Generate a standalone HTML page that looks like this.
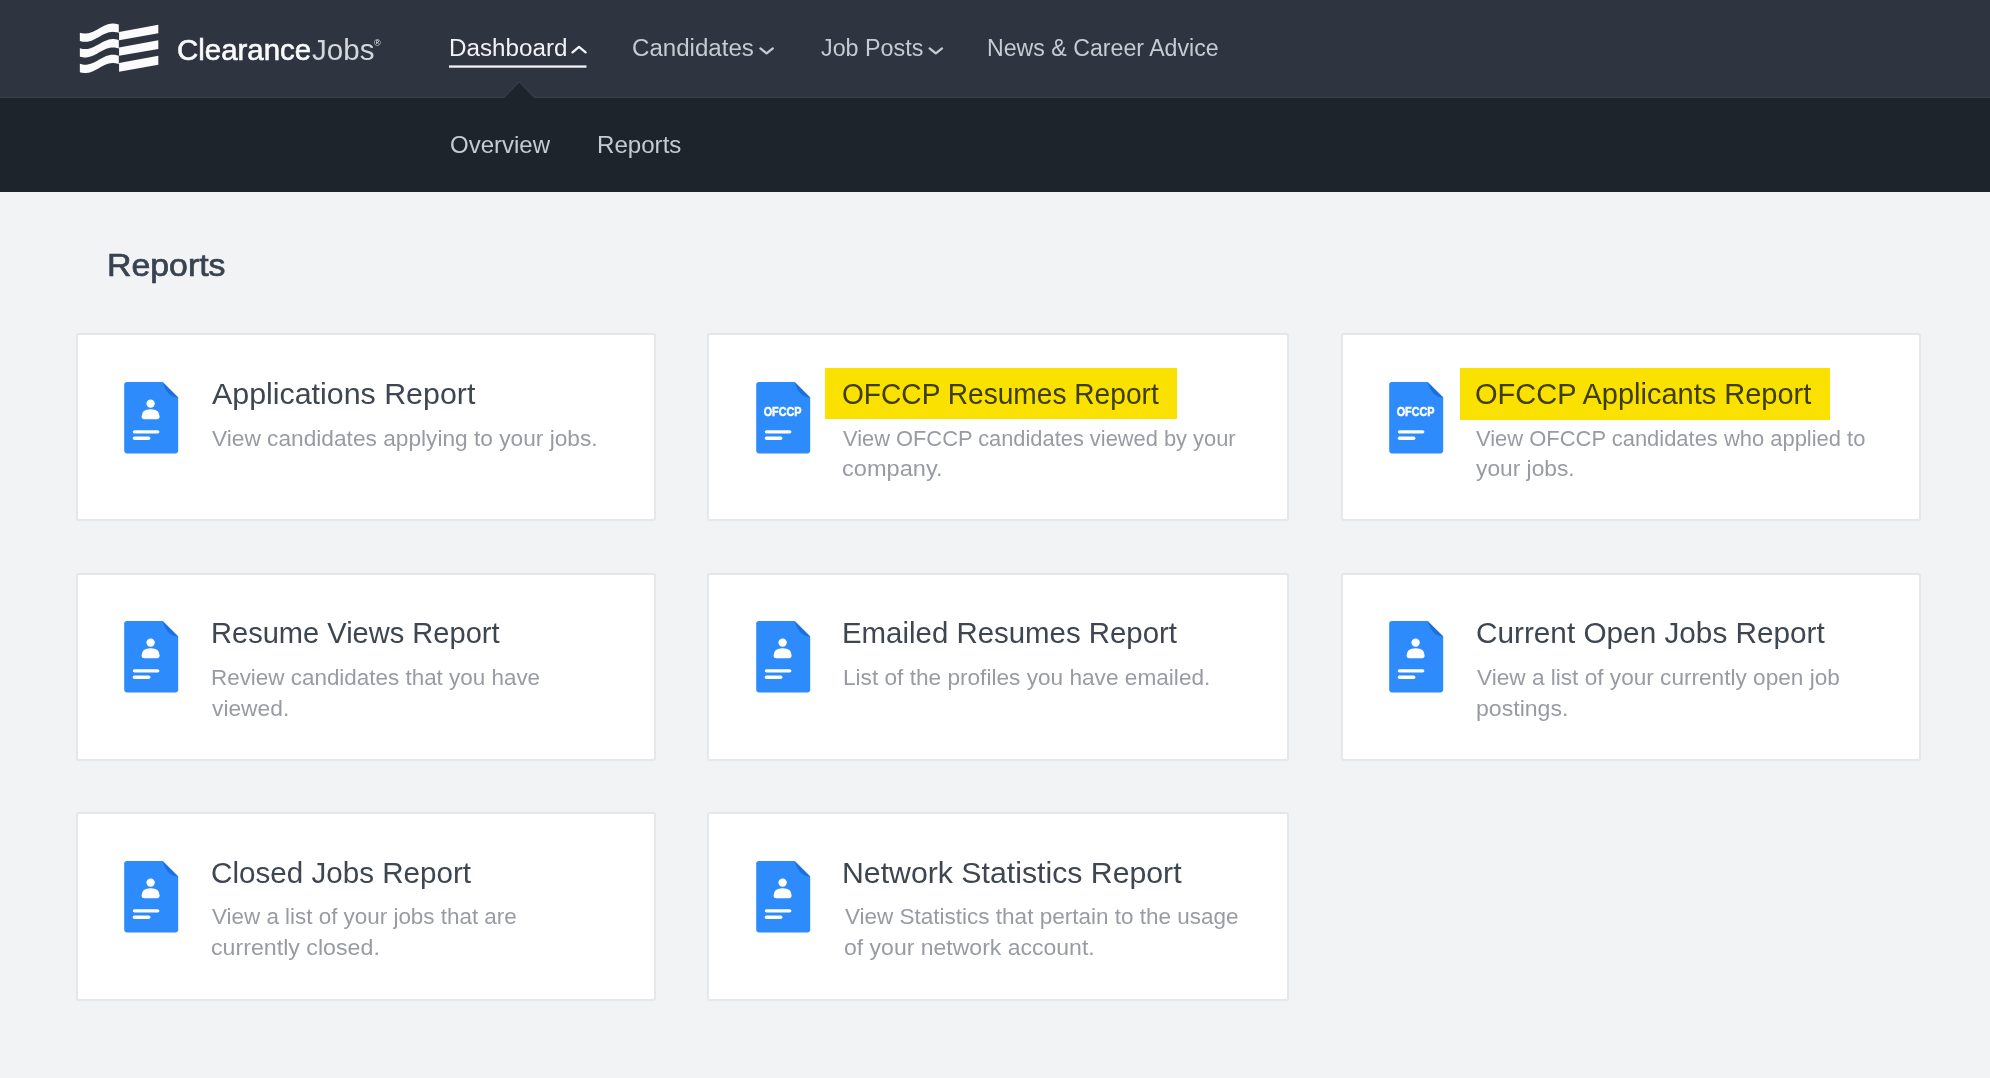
<!DOCTYPE html>
<html><head><meta charset="utf-8"><style>
html,body{margin:0;padding:0}
body{width:1990px;height:1078px;overflow:hidden;position:relative;background:#f1f3f5;font-family:"Liberation Sans",sans-serif}
.t{position:absolute;white-space:nowrap;transform-origin:0 0}
.nav{position:absolute;left:0;top:0;width:1990px;height:98px;background:#2e3440}
.sub{position:absolute;left:0;top:98px;width:1990px;height:94px;background:#1e242c}
.card{position:absolute;box-sizing:border-box;background:#fff;border:2px solid #e5e7ea;border-radius:3px;box-shadow:0 0 1px rgba(0,0,0,0.04)}
.ic{position:absolute;left:0;top:0}
.hl{position:absolute;background:#fae100;mix-blend-mode:multiply;z-index:2}
</style></head><body>
<div class="nav"></div>
<div class="sub"></div>
<svg style="position:absolute;left:0;top:0" width="1990" height="100"><polygon points="0,98 504.2,98 519.2,82.2 534.2,98 1990,98 1990,100 0,100" fill="#1e242c"/><polyline points="0,97.2 504,97.2 519.2,81.4 534.4,97.2 1990,97.2" fill="none" stroke="#363c47" stroke-width="1.4"/></svg>
<svg style="position:absolute;left:74px;top:18px" width="90" height="60" viewBox="0 0 1617 1078"><g fill="#fbfbfc"><polygon points="105.0,263.4 122.5,268.5 140.0,272.7 157.5,275.8 175.0,277.9 192.5,278.9 210.0,278.8 227.5,277.7 245.0,275.4 262.5,272.1 280.0,267.9 297.5,262.6 315.0,256.5 332.5,249.6 350.0,241.9 367.5,233.6 385.0,224.7 402.5,215.5 420.0,205.9 437.5,196.1 455.0,186.2 472.5,176.3 490.0,166.6 507.5,157.2 525.0,148.1 542.5,139.6 560.0,131.6 577.5,124.4 595.0,117.9 612.5,112.3 630.0,107.6 647.5,103.9 665.0,101.2 682.5,99.5 700.0,99.0 717.5,99.5 735.0,101.2 752.5,103.9 770.0,107.6 787.5,112.3 805.0,117.9 805.0,267.9 787.5,262.3 770.0,257.6 752.5,253.9 735.0,251.2 717.5,249.5 700.0,249.0 682.5,249.5 665.0,251.2 647.5,253.9 630.0,257.6 612.5,262.3 595.0,267.9 577.5,274.4 560.0,281.6 542.5,289.6 525.0,298.1 507.5,307.2 490.0,316.6 472.5,326.3 455.0,336.2 437.5,346.1 420.0,355.9 402.5,365.5 385.0,374.7 367.5,383.6 350.0,391.9 332.5,399.6 315.0,406.5 297.5,412.6 280.0,417.9 262.5,422.1 245.0,425.4 227.5,427.7 210.0,428.8 192.5,428.9 175.0,427.9 157.5,425.8 140.0,422.7 122.5,418.5 105.0,413.4"/><polygon points="105.0,543.4 122.5,548.5 140.0,552.7 157.5,555.8 175.0,557.9 192.5,558.9 210.0,558.8 227.5,557.7 245.0,555.4 262.5,552.1 280.0,547.9 297.5,542.6 315.0,536.5 332.5,529.6 350.0,521.9 367.5,513.6 385.0,504.7 402.5,495.5 420.0,485.9 437.5,476.1 455.0,466.2 472.5,456.3 490.0,446.6 507.5,437.2 525.0,428.1 542.5,419.6 560.0,411.6 577.5,404.4 595.0,397.9 612.5,392.3 630.0,387.6 647.5,383.9 665.0,381.2 682.5,379.5 700.0,379.0 717.5,379.5 735.0,381.2 752.5,383.9 770.0,387.6 787.5,392.3 805.0,397.9 805.0,547.9 787.5,542.3 770.0,537.6 752.5,533.9 735.0,531.2 717.5,529.5 700.0,529.0 682.5,529.5 665.0,531.2 647.5,533.9 630.0,537.6 612.5,542.3 595.0,547.9 577.5,554.4 560.0,561.6 542.5,569.6 525.0,578.1 507.5,587.2 490.0,596.6 472.5,606.3 455.0,616.2 437.5,626.1 420.0,635.9 402.5,645.5 385.0,654.7 367.5,663.6 350.0,671.9 332.5,679.6 315.0,686.5 297.5,692.6 280.0,697.9 262.5,702.1 245.0,705.4 227.5,707.7 210.0,708.8 192.5,708.9 175.0,707.9 157.5,705.8 140.0,702.7 122.5,698.5 105.0,693.4"/><polygon points="105.0,823.4 122.5,828.5 140.0,832.7 157.5,835.8 175.0,837.9 192.5,838.9 210.0,838.8 227.5,837.7 245.0,835.4 262.5,832.1 280.0,827.9 297.5,822.6 315.0,816.5 332.5,809.6 350.0,801.9 367.5,793.6 385.0,784.7 402.5,775.5 420.0,765.9 437.5,756.1 455.0,746.2 472.5,736.3 490.0,726.6 507.5,717.2 525.0,708.1 542.5,699.6 560.0,691.6 577.5,684.4 595.0,677.9 612.5,672.3 630.0,667.6 647.5,663.9 665.0,661.2 682.5,659.5 700.0,659.0 717.5,659.5 735.0,661.2 752.5,663.9 770.0,667.6 787.5,672.3 805.0,677.9 805.0,827.9 787.5,822.3 770.0,817.6 752.5,813.9 735.0,811.2 717.5,809.5 700.0,809.0 682.5,809.5 665.0,811.2 647.5,813.9 630.0,817.6 612.5,822.3 595.0,827.9 577.5,834.4 560.0,841.6 542.5,849.6 525.0,858.1 507.5,867.2 490.0,876.6 472.5,886.3 455.0,896.2 437.5,906.1 420.0,915.9 402.5,925.5 385.0,934.7 367.5,943.6 350.0,951.9 332.5,959.6 315.0,966.5 297.5,972.6 280.0,977.9 262.5,982.1 245.0,985.4 227.5,987.7 210.0,988.8 192.5,988.9 175.0,987.9 157.5,985.8 140.0,982.7 122.5,978.5 105.0,973.4"/><polygon points="810,250 1515,120 1515,275 810,398"/><polygon points="810,530 1515,400 1515,555 810,680"/><polygon points="810,810 1515,680 1515,838 810,965"/></g></svg>
<div class="t" style="left:177.43px;top:36px;font-size:29.07px;line-height:29.07px;color:#f9fafb;transform:scaleX(1.0124);-webkit-text-stroke:0.6px #f9fafb;">Clearance</div>
<div class="t" style="left:312.06px;top:35px;font-size:29.94px;line-height:29.94px;color:#d3d6db;transform:scaleX(0.9878);">Jobs</div>
<div class="t" style="left:374px;top:39px;font-size:9px;line-height:9px;color:#eee">&#174;</div>
<div class="t" style="left:449.00px;top:36px;font-size:24.56px;line-height:24.56px;color:#f1f2f5;transform:scaleX(0.9867);">Dashboard</div>
<div class="t" style="left:632.49px;top:36px;font-size:24.56px;line-height:24.56px;color:#c6cad1;transform:scaleX(0.9811);">Candidates</div>
<div class="t" style="left:821.15px;top:36px;font-size:24.56px;line-height:24.56px;color:#c6cad1;transform:scaleX(0.9493);">Job Posts</div>
<div class="t" style="left:986.89px;top:36px;font-size:24.56px;line-height:24.56px;color:#c6cad1;transform:scaleX(0.9434);">News &amp; Career Advice</div>
<svg style="position:absolute;left:0;top:0" width="1990" height="100"><g fill="none" stroke-width="2.3" stroke-linecap="round" stroke-linejoin="round"><polyline stroke="#f1f2f5" points="572.5,52.4 579,46.9 585.6,52.4"/><polyline stroke="#c6cad1" points="760.4,48.4 766.6,53.4 772.8,48.4"/><polyline stroke="#c6cad1" points="929.6,48.4 935.8,53.4 942,48.4"/></g><rect x="449" y="65.4" width="137.5" height="2.3" fill="#f1f2f5"/></svg>
<div class="t" style="left:449.66px;top:133px;font-size:24.71px;line-height:24.71px;color:#c6cad1;transform:scaleX(0.9719);">Overview</div>
<div class="t" style="left:596.81px;top:133px;font-size:24.71px;line-height:24.71px;color:#c6cad1;transform:scaleX(0.9756);">Reports</div>
<div class="t" style="left:106.71px;top:249px;font-size:31.98px;line-height:31.98px;color:#38434f;transform:scaleX(1.0587);-webkit-text-stroke:0.7px #38434f;">Reports</div>
<div class="card" style="left:76.07px;top:333.10px;width:579.93px;height:187.90px"></div>
<div style="position:absolute;left:124.37px;top:381.60px"><svg class="ic" width="56" height="73" viewBox="0 0 56 73"><path d="M3,0 H38.6 L54.2,15.4 V68.6 A2.8,2.8 0 0 1 51.4,71.4 H3 A2.8,2.8 0 0 1 0.2,68.6 V2.8 A2.8,2.8 0 0 1 3,0 Z" fill="#2d8bfb"/><path d="M38.6,0 L54.2,15.4 Q43,15.5 38.6,0 Z" fill="#1f6fd6"/><circle cx="26.6" cy="21.6" r="4.2" fill="#fff"/><path d="M17.6,34.6 Q17.6,27.3 26.6,27.3 Q35.6,27.3 35.6,34.6 Q35.6,37.2 33,37.2 H20.2 Q17.6,37.2 17.6,34.6 Z" fill="#fff"/><rect x="8.8" y="48.2" width="26.6" height="3.3" rx="1.65" fill="#fff"/><rect x="8.8" y="54.6" width="17.6" height="3.3" rx="1.65" fill="#fff"/></svg></div>
<div class="t" style="left:211.92px;top:379px;font-size:29.94px;line-height:29.94px;color:#3e4651;transform:scaleX(1.0144);">Applications Report</div>
<div class="t" style="left:211.89px;top:427px;font-size:22.97px;line-height:22.97px;color:#989ca2;transform:scaleX(0.9880);">View candidates applying to your jobs.</div>
<div class="card" style="left:707.40px;top:333.10px;width:582.10px;height:187.90px"></div>
<div style="position:absolute;left:755.70px;top:381.60px"><svg class="ic" width="56" height="73" viewBox="0 0 56 73"><path d="M3,0 H38.6 L54.2,15.4 V68.6 A2.8,2.8 0 0 1 51.4,71.4 H3 A2.8,2.8 0 0 1 0.2,68.6 V2.8 A2.8,2.8 0 0 1 3,0 Z" fill="#2d8bfb"/><path d="M38.6,0 L54.2,15.4 Q43,15.5 38.6,0 Z" fill="#1f6fd6"/><text x="7.7" y="33.9" textLength="37.9" lengthAdjust="spacingAndGlyphs" font-family="Liberation Sans" font-weight="bold" font-size="13.3" fill="#fff" stroke="#fff" stroke-width="0.5">OFCCP</text><rect x="8.8" y="48.2" width="26.6" height="3.3" rx="1.65" fill="#fff"/><rect x="8.8" y="54.6" width="17.6" height="3.3" rx="1.65" fill="#fff"/></svg></div>
<div class="hl" style="left:825.1px;top:368.2px;width:351.9px;height:51.3px"></div>
<div class="t" style="left:841.66px;top:379px;font-size:29.94px;line-height:29.94px;color:#3e4651;transform:scaleX(0.9393);">OFCCP Resumes Report</div>
<div class="t" style="left:842.89px;top:427px;font-size:22.97px;line-height:22.97px;color:#989ca2;transform:scaleX(0.9510);">View OFCCP candidates viewed by your</div>
<div class="t" style="left:842.00px;top:457px;font-size:22.97px;line-height:22.97px;color:#989ca2;transform:scaleX(1.0265);">company.</div>
<div class="card" style="left:1340.50px;top:333.10px;width:580.50px;height:187.90px"></div>
<div style="position:absolute;left:1388.80px;top:381.60px"><svg class="ic" width="56" height="73" viewBox="0 0 56 73"><path d="M3,0 H38.6 L54.2,15.4 V68.6 A2.8,2.8 0 0 1 51.4,71.4 H3 A2.8,2.8 0 0 1 0.2,68.6 V2.8 A2.8,2.8 0 0 1 3,0 Z" fill="#2d8bfb"/><path d="M38.6,0 L54.2,15.4 Q43,15.5 38.6,0 Z" fill="#1f6fd6"/><text x="7.7" y="33.9" textLength="37.9" lengthAdjust="spacingAndGlyphs" font-family="Liberation Sans" font-weight="bold" font-size="13.3" fill="#fff" stroke="#fff" stroke-width="0.5">OFCCP</text><rect x="8.8" y="48.2" width="26.6" height="3.3" rx="1.65" fill="#fff"/><rect x="8.8" y="54.6" width="17.6" height="3.3" rx="1.65" fill="#fff"/></svg></div>
<div class="hl" style="left:1460.1px;top:368.1px;width:369.5px;height:51.5px"></div>
<div class="t" style="left:1475.12px;top:379px;font-size:29.94px;line-height:29.94px;color:#3e4651;transform:scaleX(0.9687);">OFCCP Applicants Report</div>
<div class="t" style="left:1476.39px;top:427px;font-size:22.97px;line-height:22.97px;color:#989ca2;transform:scaleX(0.9550);">View OFCCP candidates who applied to</div>
<div class="t" style="left:1476.44px;top:457px;font-size:22.97px;line-height:22.97px;color:#989ca2;transform:scaleX(0.9905);">your jobs.</div>
<div class="card" style="left:76.07px;top:572.50px;width:579.93px;height:188.40px"></div>
<div style="position:absolute;left:124.37px;top:621.00px"><svg class="ic" width="56" height="73" viewBox="0 0 56 73"><path d="M3,0 H38.6 L54.2,15.4 V68.6 A2.8,2.8 0 0 1 51.4,71.4 H3 A2.8,2.8 0 0 1 0.2,68.6 V2.8 A2.8,2.8 0 0 1 3,0 Z" fill="#2d8bfb"/><path d="M38.6,0 L54.2,15.4 Q43,15.5 38.6,0 Z" fill="#1f6fd6"/><circle cx="26.6" cy="21.6" r="4.2" fill="#fff"/><path d="M17.6,34.6 Q17.6,27.3 26.6,27.3 Q35.6,27.3 35.6,34.6 Q35.6,37.2 33,37.2 H20.2 Q17.6,37.2 17.6,34.6 Z" fill="#fff"/><rect x="8.8" y="48.2" width="26.6" height="3.3" rx="1.65" fill="#fff"/><rect x="8.8" y="54.6" width="17.6" height="3.3" rx="1.65" fill="#fff"/></svg></div>
<div class="t" style="left:211.20px;top:618px;font-size:29.94px;line-height:29.94px;color:#3e4651;transform:scaleX(0.9707);">Resume Views Report</div>
<div class="t" style="left:211.05px;top:666px;font-size:22.97px;line-height:22.97px;color:#989ca2;transform:scaleX(0.9762);">Review candidates that you have</div>
<div class="t" style="left:212.24px;top:697px;font-size:22.97px;line-height:22.97px;color:#989ca2;transform:scaleX(0.9917);">viewed.</div>
<div class="card" style="left:707.40px;top:572.50px;width:582.10px;height:188.40px"></div>
<div style="position:absolute;left:755.70px;top:621.00px"><svg class="ic" width="56" height="73" viewBox="0 0 56 73"><path d="M3,0 H38.6 L54.2,15.4 V68.6 A2.8,2.8 0 0 1 51.4,71.4 H3 A2.8,2.8 0 0 1 0.2,68.6 V2.8 A2.8,2.8 0 0 1 3,0 Z" fill="#2d8bfb"/><path d="M38.6,0 L54.2,15.4 Q43,15.5 38.6,0 Z" fill="#1f6fd6"/><circle cx="26.6" cy="21.6" r="4.2" fill="#fff"/><path d="M17.6,34.6 Q17.6,27.3 26.6,27.3 Q35.6,27.3 35.6,34.6 Q35.6,37.2 33,37.2 H20.2 Q17.6,37.2 17.6,34.6 Z" fill="#fff"/><rect x="8.8" y="48.2" width="26.6" height="3.3" rx="1.65" fill="#fff"/><rect x="8.8" y="54.6" width="17.6" height="3.3" rx="1.65" fill="#fff"/></svg></div>
<div class="t" style="left:842.27px;top:618px;font-size:29.94px;line-height:29.94px;color:#3e4651;transform:scaleX(0.9822);">Emailed Resumes Report</div>
<div class="t" style="left:842.83px;top:666px;font-size:22.97px;line-height:22.97px;color:#989ca2;transform:scaleX(0.9853);">List of the profiles you have emailed.</div>
<div class="card" style="left:1340.50px;top:572.50px;width:580.50px;height:188.40px"></div>
<div style="position:absolute;left:1388.80px;top:621.00px"><svg class="ic" width="56" height="73" viewBox="0 0 56 73"><path d="M3,0 H38.6 L54.2,15.4 V68.6 A2.8,2.8 0 0 1 51.4,71.4 H3 A2.8,2.8 0 0 1 0.2,68.6 V2.8 A2.8,2.8 0 0 1 3,0 Z" fill="#2d8bfb"/><path d="M38.6,0 L54.2,15.4 Q43,15.5 38.6,0 Z" fill="#1f6fd6"/><circle cx="26.6" cy="21.6" r="4.2" fill="#fff"/><path d="M17.6,34.6 Q17.6,27.3 26.6,27.3 Q35.6,27.3 35.6,34.6 Q35.6,37.2 33,37.2 H20.2 Q17.6,37.2 17.6,34.6 Z" fill="#fff"/><rect x="8.8" y="48.2" width="26.6" height="3.3" rx="1.65" fill="#fff"/><rect x="8.8" y="54.6" width="17.6" height="3.3" rx="1.65" fill="#fff"/></svg></div>
<div class="t" style="left:1475.51px;top:618px;font-size:29.94px;line-height:29.94px;color:#3e4651;transform:scaleX(0.9934);">Current Open Jobs Report</div>
<div class="t" style="left:1476.89px;top:666px;font-size:22.97px;line-height:22.97px;color:#989ca2;transform:scaleX(0.9846);">View a list of your currently open job</div>
<div class="t" style="left:1475.50px;top:697px;font-size:22.97px;line-height:22.97px;color:#989ca2;transform:scaleX(1.0050);">postings.</div>
<div class="card" style="left:76.07px;top:812.00px;width:579.93px;height:188.70px"></div>
<div style="position:absolute;left:124.37px;top:860.50px"><svg class="ic" width="56" height="73" viewBox="0 0 56 73"><path d="M3,0 H38.6 L54.2,15.4 V68.6 A2.8,2.8 0 0 1 51.4,71.4 H3 A2.8,2.8 0 0 1 0.2,68.6 V2.8 A2.8,2.8 0 0 1 3,0 Z" fill="#2d8bfb"/><path d="M38.6,0 L54.2,15.4 Q43,15.5 38.6,0 Z" fill="#1f6fd6"/><circle cx="26.6" cy="21.6" r="4.2" fill="#fff"/><path d="M17.6,34.6 Q17.6,27.3 26.6,27.3 Q35.6,27.3 35.6,34.6 Q35.6,37.2 33,37.2 H20.2 Q17.6,37.2 17.6,34.6 Z" fill="#fff"/><rect x="8.8" y="48.2" width="26.6" height="3.3" rx="1.65" fill="#fff"/><rect x="8.8" y="54.6" width="17.6" height="3.3" rx="1.65" fill="#fff"/></svg></div>
<div class="t" style="left:210.52px;top:858px;font-size:29.94px;line-height:29.94px;color:#3e4651;transform:scaleX(0.9891);">Closed Jobs Report</div>
<div class="t" style="left:211.89px;top:905px;font-size:22.97px;line-height:22.97px;color:#989ca2;transform:scaleX(0.9755);">View a list of your jobs that are</div>
<div class="t" style="left:211.01px;top:936px;font-size:22.97px;line-height:22.97px;color:#989ca2;transform:scaleX(1.0095);">currently closed.</div>
<div class="card" style="left:707.40px;top:812.00px;width:582.10px;height:188.70px"></div>
<div style="position:absolute;left:755.70px;top:860.50px"><svg class="ic" width="56" height="73" viewBox="0 0 56 73"><path d="M3,0 H38.6 L54.2,15.4 V68.6 A2.8,2.8 0 0 1 51.4,71.4 H3 A2.8,2.8 0 0 1 0.2,68.6 V2.8 A2.8,2.8 0 0 1 3,0 Z" fill="#2d8bfb"/><path d="M38.6,0 L54.2,15.4 Q43,15.5 38.6,0 Z" fill="#1f6fd6"/><circle cx="26.6" cy="21.6" r="4.2" fill="#fff"/><path d="M17.6,34.6 Q17.6,27.3 26.6,27.3 Q35.6,27.3 35.6,34.6 Q35.6,37.2 33,37.2 H20.2 Q17.6,37.2 17.6,34.6 Z" fill="#fff"/><rect x="8.8" y="48.2" width="26.6" height="3.3" rx="1.65" fill="#fff"/><rect x="8.8" y="54.6" width="17.6" height="3.3" rx="1.65" fill="#fff"/></svg></div>
<div class="t" style="left:842.20px;top:858px;font-size:29.94px;line-height:29.94px;color:#3e4651;transform:scaleX(1.0105);">Network Statistics Report</div>
<div class="t" style="left:844.59px;top:905px;font-size:22.97px;line-height:22.97px;color:#989ca2;transform:scaleX(0.9794);">View Statistics that pertain to the usage</div>
<div class="t" style="left:843.72px;top:936px;font-size:22.97px;line-height:22.97px;color:#989ca2;transform:scaleX(1.0018);">of your network account.</div>
</body></html>
